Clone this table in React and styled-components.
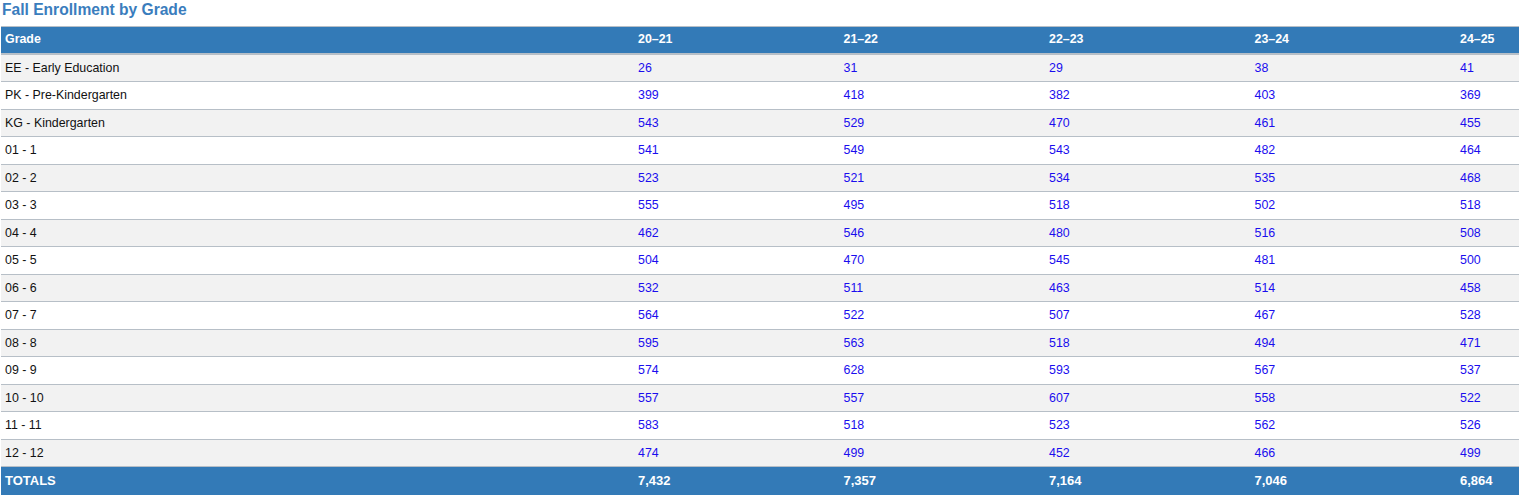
import styled, { createGlobalStyle } from 'styled-components';

const GlobalStyle = createGlobalStyle`
  body {
    margin: 0;
    padding: 0 0 0 1px;
    background: #fff;
    font-family: "Liberation Sans", Arial, sans-serif;
  }
`;

const rows = [
  ['EE - Early Education', 26, 31, 29, 38, 41],
  ['PK - Pre-Kindergarten', 399, 418, 382, 403, 369],
  ['KG - Kindergarten', 543, 529, 470, 461, 455],
  ['01 - 1', 541, 549, 543, 482, 464],
  ['02 - 2', 523, 521, 534, 535, 468],
  ['03 - 3', 555, 495, 518, 502, 518],
  ['04 - 4', 462, 546, 480, 516, 508],
  ['05 - 5', 504, 470, 545, 481, 500],
  ['06 - 6', 532, 511, 463, 514, 458],
  ['07 - 7', 564, 522, 507, 467, 528],
  ['08 - 8', 595, 563, 518, 494, 471],
  ['09 - 9', 574, 628, 593, 567, 537],
  ['10 - 10', 557, 557, 607, 558, 522],
  ['11 - 11', 583, 518, 523, 562, 526],
  ['12 - 12', 474, 499, 452, 466, 499],
];

const years = ['20–21', '21–22', '22–23', '23–24', '24–25'];
const totals = ['7,432', '7,357', '7,164', '7,046', '6,864'];

function App() {
  return (
    <Wrapper>
      <GlobalStyle />
      <Title>Fall Enrollment by Grade</Title>
      <Table>
        <colgroup>
          <col style={{ width: '633px' }} />
          <col style={{ width: '205.5px' }} />
          <col style={{ width: '205.5px' }} />
          <col style={{ width: '205.5px' }} />
          <col style={{ width: '205.5px' }} />
          <col />
        </colgroup>
        <thead>
          <tr>
            <HeadCell>Grade</HeadCell>
            {years.map((y) => (
              <HeadCell key={y}>{y}</HeadCell>
            ))}
          </tr>
        </thead>
        <tbody>
          {rows.map(([grade, ...vals], i) => (
            <Row key={grade} $striped={i % 2 === 0}>
              <GradeCell>{grade}</GradeCell>
              {vals.map((v, j) => (
                <NumCell key={j}>{v}</NumCell>
              ))}
            </Row>
          ))}
        </tbody>
        <tfoot>
          <tr>
            <TotalCell>TOTALS</TotalCell>
            {totals.map((t) => (
              <TotalCell key={t}>{t}</TotalCell>
            ))}
          </tr>
        </tfoot>
      </Table>
    </Wrapper>
  );
}

export default App;

const Wrapper = styled.div`
  width: 1518px;
`;

const Title = styled.h2`
  margin: 0;
  padding: 0 0 0 1px;
  height: 26px;
  line-height: 20px;
  font-size: 15.6px;
  font-weight: bold;
  color: #3a7dbd;
`;

const Table = styled.table`
  width: 1518px;
  table-layout: fixed;
  border-collapse: collapse;
  font-size: 12.4px;
  border-top: 1px solid #b7bfc7;
`;

const HeadCell = styled.th`
  background: #337ab7;
  color: #fff;
  font-weight: bold;
  text-align: left;
  padding: 5px 4px 6px;
  line-height: 15px;
  border-bottom: 2px solid #b7bfc7;
  white-space: nowrap;
`;

const Row = styled.tr`
  background: ${(p) => (p.$striped ? '#f2f2f2' : '#fff')};
`;

const GradeCell = styled.td`
  padding: 6px 4px 6px;
  line-height: 14.47px;
  color: #111;
  white-space: nowrap;
  border-bottom: 1px solid #b7bfc7;
`;

const NumCell = styled(GradeCell)`
  color: #1a0dee;
`;

const TotalCell = styled.td`
  background: #337ab7;
  color: #fff;
  font-size: 13px;
  font-weight: bold;
  padding: 6px 4px 6px;
  line-height: 16px;
  white-space: nowrap;
`;
